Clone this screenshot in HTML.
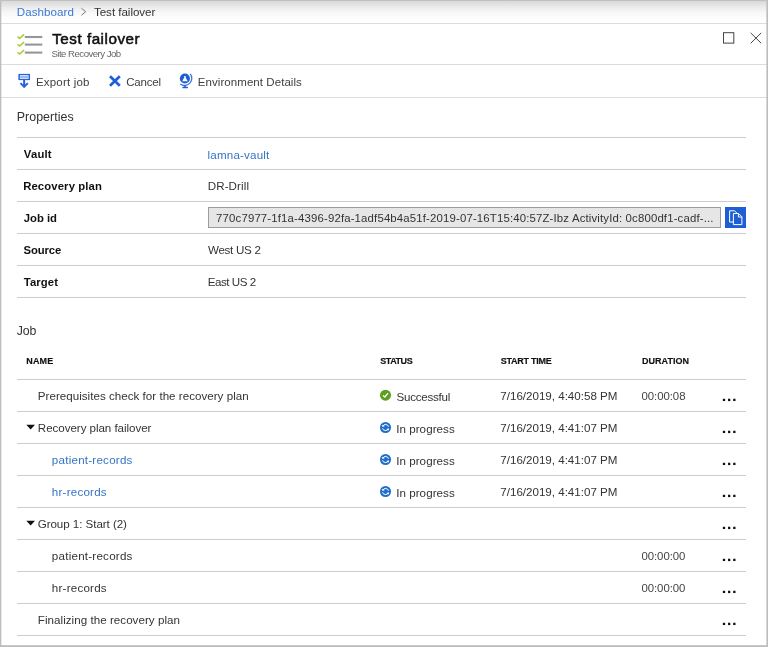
<!DOCTYPE html>
<html lang="en"><head><meta charset="utf-8"><title>Test failover - Site Recovery Job</title>
<style>
html,body{margin:0;padding:0;background:#fff;}
body{width:768px;height:647px;position:relative;overflow:hidden;font-family:"Liberation Sans",sans-serif;}
.t{position:absolute;white-space:nowrap;line-height:1;}
.a{position:absolute;}
.hl{position:absolute;height:1px;background:#cdcdcd;left:17px;width:729px;}
.fl{position:absolute;height:1px;background:#dcdcdc;left:1px;width:766px;}
svg{position:absolute;overflow:visible;}
</style></head><body>
<div class="a" style="left:0;top:0;width:768px;height:24px;background:linear-gradient(#d4d4d4 0px,#dcdcdc 2px,#e5e5e5 5px,#f0f0f0 9px,#f8f8f8 13px,#fff 20px);"></div>
<div class="fl" style="top:23px"></div>
<div class="fl" style="top:64px"></div>
<div class="fl" style="top:97px"></div>
<div class="hl" style="top:137px"></div>
<div class="hl" style="top:169px"></div>
<div class="hl" style="top:201px"></div>
<div class="hl" style="top:233px"></div>
<div class="hl" style="top:265px"></div>
<div class="hl" style="top:297px"></div>
<div class="hl" style="top:379px"></div>
<div class="hl" style="top:411px"></div>
<div class="hl" style="top:443px"></div>
<div class="hl" style="top:475px"></div>
<div class="hl" style="top:507px"></div>
<div class="hl" style="top:539px"></div>
<div class="hl" style="top:571px"></div>
<div class="hl" style="top:603px"></div>
<div class="hl" style="top:635px"></div>
<!-- job id input + copy button -->
<div class="a" style="left:208px;top:207px;width:511px;height:19px;background:#e6e6e6;border:1px solid #9c9c9c;"></div>
<div class="a" style="left:725px;top:207px;width:21px;height:21px;background:#1f5fd6;"></div>
<svg style="left:0;top:0" width="768" height="647" viewBox="0 0 768 647">
<!-- breadcrumb chevron -->
<polyline points="81.4,8.2 85.7,11.75 81.4,15.3" fill="none" stroke="#777" stroke-width="1"/>
<!-- title icon -->
<g fill="none" stroke="#a8cc35" stroke-width="1.5">
<polyline points="17.5,36.6 19.6,38.4 24.1,34.4"/>
<polyline points="17.5,44.3 19.6,46.1 24.1,42.1"/>
<polyline points="17.5,52.3 19.6,54.1 24.1,50.1"/>
</g>
<g stroke="#969696" stroke-width="2.1">
<line x1="24.8" y1="37" x2="42.3" y2="37"/>
<line x1="24.8" y1="44.6" x2="42.3" y2="44.6"/>
<line x1="24.8" y1="52.6" x2="42.3" y2="52.6"/>
</g>
<!-- maximize / close -->
<rect x="723.5" y="32.7" width="10.3" height="10.4" fill="none" stroke="#444" stroke-width="1"/>
<path d="M750.7 32.9 L761.2 43.3 M761.2 32.9 L750.7 43.3" fill="none" stroke="#444" stroke-width="1"/>
<!-- export icon -->
<rect x="18.4" y="73.9" width="11.6" height="6.2" fill="#2563d8"/>
<rect x="19.9" y="75.2" width="8.6" height="3.6" fill="#fff"/>
<rect x="19.9" y="76" width="8.6" height="2" fill="#9db9ec"/>
<path d="M24.15 80 V86.4 M20.5 83.1 L24.15 86.9 L27.8 83.1" fill="none" stroke="#2563d8" stroke-width="2"/>
<!-- cancel icon -->
<path d="M110 76.2 L119.8 85.8 M119.8 76.2 L110 85.8" fill="none" stroke="#1c5fd6" stroke-width="2.7"/>
<!-- environment icon -->
<circle cx="184.9" cy="78.5" r="5.1" fill="#1f5fd6"/>
<path d="M184.2 75.9 H185.7 V77.6 L187.7 81.3 H182.2 L184.2 77.6 Z" fill="#fff"/>
<path d="M190.3 73.9 A7.2 7.2 0 0 1 180.2 84" fill="none" stroke="#3b74dc" stroke-width="1.3"/>
<path d="M185 85.6 V87.3" stroke="#1f5fd6" stroke-width="1.6"/>
<rect x="182.3" y="86.8" width="5.7" height="1.4" rx="0.6" fill="#1f5fd6"/>
<!-- copy icon -->
<g fill="#1f5fd6" stroke="#fff" stroke-width="1">
<path d="M729.6 210.8 H734.6 L737.6 213.8 V222 H729.6 Z"/>
<path d="M733.4 213.5 H738.6 L741.9 216.8 V224.6 H733.4 Z"/>
<path d="M738.4 213.6 V217 H741.8" fill="none"/>
</g>
<!-- expand triangles -->
<path d="M26.3 424.7 H35 L30.65 429.6 Z" fill="#111"/>
<path d="M26.3 520.7 H35 L30.65 525.6 Z" fill="#111"/>
<!-- status icons -->
<circle cx="385.5" cy="395.2" r="5.55" fill="#5e9e20"/>
<polyline points="383,395.4 384.9,397 388,393.2" fill="none" stroke="#fff" stroke-width="1.3"/>
<g transform="translate(0,0)">
<circle cx="385.5" cy="427.5" r="5.55" fill="#1f6fc8"/>
<path d="M382.7 426.3 A3.1 3.1 0 0 1 388.5 426.7" fill="none" stroke="#fff" stroke-width="1"/>
<path d="M388.3 428.7 A3.1 3.1 0 0 1 382.5 428.3" fill="none" stroke="#fff" stroke-width="1"/>
<rect x="382.2" y="425" width="2" height="1.6" fill="#fff"/>
<rect x="386.9" y="428.7" width="2" height="1.6" fill="#fff"/>
</g>
<g transform="translate(0,32)">
<circle cx="385.5" cy="427.5" r="5.55" fill="#1f6fc8"/>
<path d="M382.7 426.3 A3.1 3.1 0 0 1 388.5 426.7" fill="none" stroke="#fff" stroke-width="1"/>
<path d="M388.3 428.7 A3.1 3.1 0 0 1 382.5 428.3" fill="none" stroke="#fff" stroke-width="1"/>
<rect x="382.2" y="425" width="2" height="1.6" fill="#fff"/>
<rect x="386.9" y="428.7" width="2" height="1.6" fill="#fff"/>
</g>
<g transform="translate(0,64)">
<circle cx="385.5" cy="427.5" r="5.55" fill="#1f6fc8"/>
<path d="M382.7 426.3 A3.1 3.1 0 0 1 388.5 426.7" fill="none" stroke="#fff" stroke-width="1"/>
<path d="M388.3 428.7 A3.1 3.1 0 0 1 382.5 428.3" fill="none" stroke="#fff" stroke-width="1"/>
<rect x="382.2" y="425" width="2" height="1.6" fill="#fff"/>
<rect x="386.9" y="428.7" width="2" height="1.6" fill="#fff"/>
</g>
<!-- ellipsis dots -->
<g fill="#111">
<g transform="translate(0,0)"><rect x="722.85" y="398.75" width="2.3" height="2.3"/><rect x="728.0" y="398.75" width="2.3" height="2.3"/><rect x="733.2" y="398.75" width="2.3" height="2.3"/></g>
<g transform="translate(0,32)"><rect x="722.85" y="398.75" width="2.3" height="2.3"/><rect x="728.0" y="398.75" width="2.3" height="2.3"/><rect x="733.2" y="398.75" width="2.3" height="2.3"/></g>
<g transform="translate(0,64)"><rect x="722.85" y="398.75" width="2.3" height="2.3"/><rect x="728.0" y="398.75" width="2.3" height="2.3"/><rect x="733.2" y="398.75" width="2.3" height="2.3"/></g>
<g transform="translate(0,96)"><rect x="722.85" y="398.75" width="2.3" height="2.3"/><rect x="728.0" y="398.75" width="2.3" height="2.3"/><rect x="733.2" y="398.75" width="2.3" height="2.3"/></g>
<g transform="translate(0,128)"><rect x="722.85" y="398.75" width="2.3" height="2.3"/><rect x="728.0" y="398.75" width="2.3" height="2.3"/><rect x="733.2" y="398.75" width="2.3" height="2.3"/></g>
<g transform="translate(0,160)"><rect x="722.85" y="398.75" width="2.3" height="2.3"/><rect x="728.0" y="398.75" width="2.3" height="2.3"/><rect x="733.2" y="398.75" width="2.3" height="2.3"/></g>
<g transform="translate(0,192)"><rect x="722.85" y="398.75" width="2.3" height="2.3"/><rect x="728.0" y="398.75" width="2.3" height="2.3"/><rect x="733.2" y="398.75" width="2.3" height="2.3"/></g>
<g transform="translate(0,224)"><rect x="722.85" y="398.75" width="2.3" height="2.3"/><rect x="728.0" y="398.75" width="2.3" height="2.3"/><rect x="733.2" y="398.75" width="2.3" height="2.3"/></g>
</g>
</svg>
<!-- outer frame -->
<div class="a" style="left:0;top:0;width:1px;height:647px;background:#bcbcbc"></div>
<div class="a" style="left:1px;top:1px;width:1px;height:645px;background:rgba(188,188,188,0.3)"></div>
<div class="a" style="left:767px;top:0;width:1px;height:647px;background:#bcbcbc"></div>
<div class="a" style="left:766px;top:1px;width:1px;height:645px;background:rgba(188,188,188,0.6)"></div>
<div class="a" style="left:0;top:0;width:768px;height:1px;background:#c0c0c0"></div>
<div class="a" style="left:0;top:646px;width:768px;height:1px;background:#bcbcbc"></div>
<div class="a" style="left:0;top:645px;width:768px;height:1px;background:rgba(188,188,188,0.8)"></div>

<div class="a" style="left:0;top:0;width:768px;height:647px;will-change:transform;">
<span class="t" style="left:16.75px;top:6.00px;font-size:11.6px;letter-spacing:0.048px;color:#3b78d6;">Dashboard</span>
<span class="t" style="left:93.94px;top:6.00px;font-size:11.6px;letter-spacing:-0.034px;color:#333;">Test failover</span>
<span class="t" style="left:52.16px;top:31.00px;font-size:15.2px;letter-spacing:0.530px;color:#111;-webkit-text-stroke:0.55px #111;">Test failover</span>
<span class="t" style="left:51.46px;top:49.00px;font-size:9.6px;letter-spacing:-0.508px;color:#666;">Site Recovery Job</span>
<span class="t" style="left:35.96px;top:77.00px;font-size:11.5px;letter-spacing:0.194px;color:#404040;">Export job</span>
<span class="t" style="left:126.22px;top:77.00px;font-size:11.5px;letter-spacing:-0.212px;color:#404040;">Cancel</span>
<span class="t" style="left:197.86px;top:77.00px;font-size:11.5px;letter-spacing:0.058px;color:#404040;">Environment Details</span>
<span class="t" style="left:16.68px;top:111.00px;font-size:12.4px;letter-spacing:0.065px;color:#333;">Properties</span>
<span class="t" style="left:23.82px;top:149.00px;font-size:11.3px;letter-spacing:0.204px;color:#111;font-weight:700;">Vault</span>
<span class="t" style="left:23.14px;top:181.00px;font-size:11.3px;letter-spacing:0.131px;color:#111;font-weight:700;">Recovery plan</span>
<span class="t" style="left:23.73px;top:213.00px;font-size:11.3px;letter-spacing:0.000px;color:#111;font-weight:700;">Job id</span>
<span class="t" style="left:23.57px;top:245.00px;font-size:11.3px;letter-spacing:-0.140px;color:#111;font-weight:700;">Source</span>
<span class="t" style="left:23.77px;top:277.00px;font-size:11.3px;letter-spacing:0.115px;color:#111;font-weight:700;">Target</span>
<span class="t" style="left:207.62px;top:149.00px;font-size:11.6px;letter-spacing:0.173px;color:#3574c4;">lamna-vault</span>
<span class="t" style="left:207.65px;top:180.00px;font-size:11.6px;letter-spacing:0.121px;color:#333;">DR-Drill</span>
<span class="t" style="left:216.12px;top:213.00px;font-size:11.4px;letter-spacing:0.151px;color:#333;">770c7977-1f1a-4396-92fa-1adf54b4a51f-2019-07-16T15:40:57Z-Ibz ActivityId: 0c800df1-cadf-...</span>
<span class="t" style="left:207.95px;top:244.00px;font-size:11.6px;letter-spacing:-0.271px;color:#333;">West US 2</span>
<span class="t" style="left:207.65px;top:276.00px;font-size:11.6px;letter-spacing:-0.459px;color:#333;">East US 2</span>
<span class="t" style="left:16.71px;top:325.00px;font-size:12.3px;letter-spacing:-0.110px;color:#333;">Job</span>
<span class="t" style="left:26.20px;top:357.00px;font-size:9.0px;letter-spacing:0.218px;color:#111;font-weight:700;-webkit-text-stroke:0.15px #111;">NAME</span>
<span class="t" style="left:380.34px;top:357.00px;font-size:9.0px;letter-spacing:-0.472px;color:#111;font-weight:700;-webkit-text-stroke:0.15px #111;">STATUS</span>
<span class="t" style="left:500.74px;top:357.00px;font-size:9.0px;letter-spacing:-0.246px;color:#111;font-weight:700;-webkit-text-stroke:0.15px #111;">START TIME</span>
<span class="t" style="left:641.90px;top:357.00px;font-size:9.0px;letter-spacing:0.040px;color:#111;font-weight:700;-webkit-text-stroke:0.15px #111;">DURATION</span>
<span class="t" style="left:37.85px;top:390.00px;font-size:11.6px;letter-spacing:0.018px;color:#333;">Prerequisites check for the recovery plan</span>
<span class="t" style="left:37.85px;top:422.00px;font-size:11.6px;letter-spacing:-0.054px;color:#333;">Recovery plan failover</span>
<span class="t" style="left:51.85px;top:454.00px;font-size:11.6px;letter-spacing:0.230px;color:#3574c4;">patient-records</span>
<span class="t" style="left:51.80px;top:486.00px;font-size:11.6px;letter-spacing:0.226px;color:#3574c4;">hr-records</span>
<span class="t" style="left:37.72px;top:518.00px;font-size:11.6px;letter-spacing:-0.057px;color:#333;">Group 1: Start (2)</span>
<span class="t" style="left:51.85px;top:550.00px;font-size:11.6px;letter-spacing:0.230px;color:#333;">patient-records</span>
<span class="t" style="left:51.80px;top:582.00px;font-size:11.6px;letter-spacing:0.226px;color:#333;">hr-records</span>
<span class="t" style="left:37.85px;top:614.00px;font-size:11.6px;letter-spacing:0.036px;color:#333;">Finalizing the recovery plan</span>
<span class="t" style="left:396.47px;top:391.00px;font-size:11.6px;letter-spacing:-0.251px;color:#333;">Successful</span>
<span class="t" style="left:396.13px;top:423.00px;font-size:11.6px;letter-spacing:0.059px;color:#333;">In progress</span>
<span class="t" style="left:396.13px;top:455.00px;font-size:11.6px;letter-spacing:0.059px;color:#333;">In progress</span>
<span class="t" style="left:396.13px;top:487.00px;font-size:11.6px;letter-spacing:0.059px;color:#333;">In progress</span>
<span class="t" style="left:500.31px;top:390.00px;font-size:11.6px;letter-spacing:-0.009px;color:#333;">7/16/2019, 4:40:58 PM</span>
<span class="t" style="left:500.31px;top:422.00px;font-size:11.6px;letter-spacing:-0.009px;color:#333;">7/16/2019, 4:41:07 PM</span>
<span class="t" style="left:500.31px;top:454.00px;font-size:11.6px;letter-spacing:-0.009px;color:#333;">7/16/2019, 4:41:07 PM</span>
<span class="t" style="left:500.31px;top:486.00px;font-size:11.6px;letter-spacing:-0.009px;color:#333;">7/16/2019, 4:41:07 PM</span>
<span class="t" style="left:641.45px;top:391.00px;font-size:11.4px;letter-spacing:-0.043px;color:#444;">00:00:08</span>
<span class="t" style="left:641.45px;top:551.00px;font-size:11.4px;letter-spacing:-0.050px;color:#444;">00:00:00</span>
<span class="t" style="left:641.45px;top:583.00px;font-size:11.4px;letter-spacing:-0.050px;color:#444;">00:00:00</span>
</div>
</body></html>
